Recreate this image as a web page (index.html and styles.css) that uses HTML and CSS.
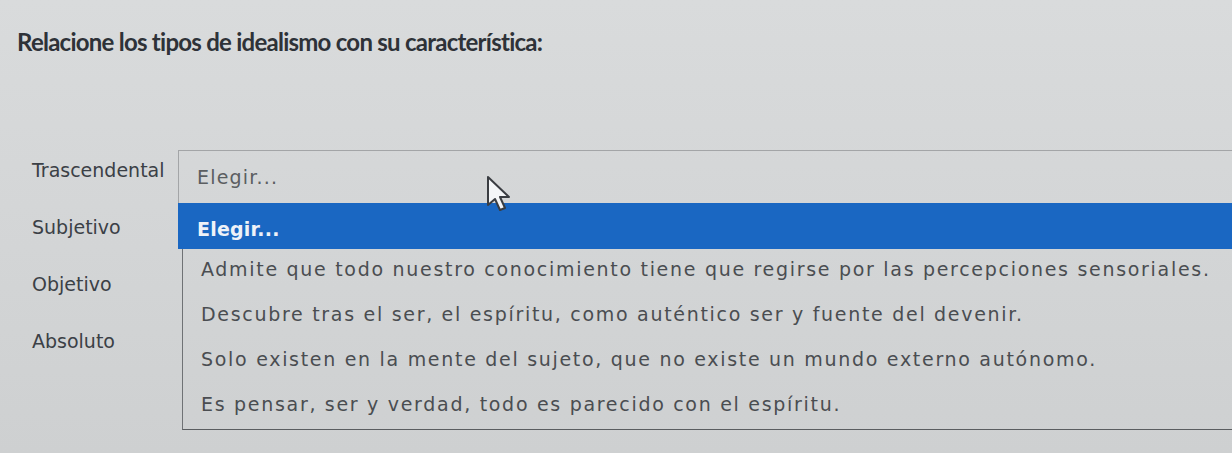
FILE: index.html
```html
<!DOCTYPE html>
<html>
<head>
<meta charset="utf-8">
<link rel="stylesheet" href="styles.css">
</head>
<body>
<div class="question">
    <h1 class="prompt">Relacione los tipos de idealismo con su característica:</h1>

    <div class="match">
        <div class="labels">
            <div class="label">Trascendental</div>
            <div class="label">Subjetivo</div>
            <div class="label">Objetivo</div>
            <div class="label">Absoluto</div>
        </div>

        <div class="answers">
            <div class="select">Elegir...</div>
            <ul class="options">
                <li class="option selected">Elegir...</li>
                <li class="option">Admite que todo nuestro conocimiento tiene que regirse por las percepciones sensoriales.</li>
                <li class="option">Descubre tras el ser, el espíritu, como auténtico ser y fuente del devenir.</li>
                <li class="option">Solo existen en la mente del sujeto, que no existe un mundo externo autónomo.</li>
                <li class="option">Es pensar, ser y verdad, todo es parecido con el espíritu.</li>
            </ul>
        </div>
    </div>
</div>

<svg class="cursor" width="28" height="38" viewBox="0 0 28 38">
    <path d="M2 2 L2 30 L9 24 L14 35 L19 33 L14 22 L23 22 Z" fill="#f4f6f8" stroke="#3a3d42" stroke-width="2" stroke-linejoin="round"/>
</svg>
</body>
</html>
```

FILE: styles.css
```css
body {
    margin: 0;
    background: linear-gradient(to bottom, #d9dbdc, #ced0d1);
    height: 453px;
    overflow: hidden;
}

.question {
    padding: 26px 0 0 17px;
}

.prompt {
    margin: 0;
    font-family: Lato, "Open Sans", sans-serif;
    font-size: 24px;
    line-height: 32px;
    font-weight: bold;
    letter-spacing: -0.75px;
    color: #2e3238;
}

.match {
    display: flex;
    margin: 84px 0 0 -17px;
}

.labels {
    width: 178px;
    flex: none;
    padding-left: 32px;
    box-sizing: border-box;
}

.label {
    height: 57px;
    line-height: 57px;
    font-family: "DejaVu Sans", sans-serif;
    font-size: 19px;
    color: #3b4046;
    white-space: nowrap;
}

.answers {
    flex: 1;
    padding-top: 8px;
}

.select {
    height: 53px;
    line-height: 53px;
    border-top: 1px solid #a3a5a7;
    border-left: 1px solid #a3a5a7;
    padding-left: 18px;
    font-family: "DejaVu Sans", sans-serif;
    font-size: 19px;
    letter-spacing: 1.2px;
    color: #5b5e61;
    box-sizing: border-box;
}

.options {
    list-style: none;
    margin: 0 0 0 4px;
    padding: 0;
    border-left: 1px solid #6f7275;
    border-bottom: 1px solid #5a5d60;
}

.option {
    height: 45px;
    line-height: 40px;
    padding-left: 18px;
    font-family: "DejaVu Sans", sans-serif;
    font-size: 19px;
    letter-spacing: 1.7px;
    color: #4a4d51;
    white-space: nowrap;
    overflow: hidden;
}

.option.selected {
    height: 46px;
    line-height: 52px;
    margin-left: -5px;
    padding-left: 19px;
    background: #1a67c2;
    color: #eef2f8;
    font-weight: bold;
    letter-spacing: 0.2px;
}

.cursor {
    position: absolute;
    left: 486px;
    top: 175px;
}
```
